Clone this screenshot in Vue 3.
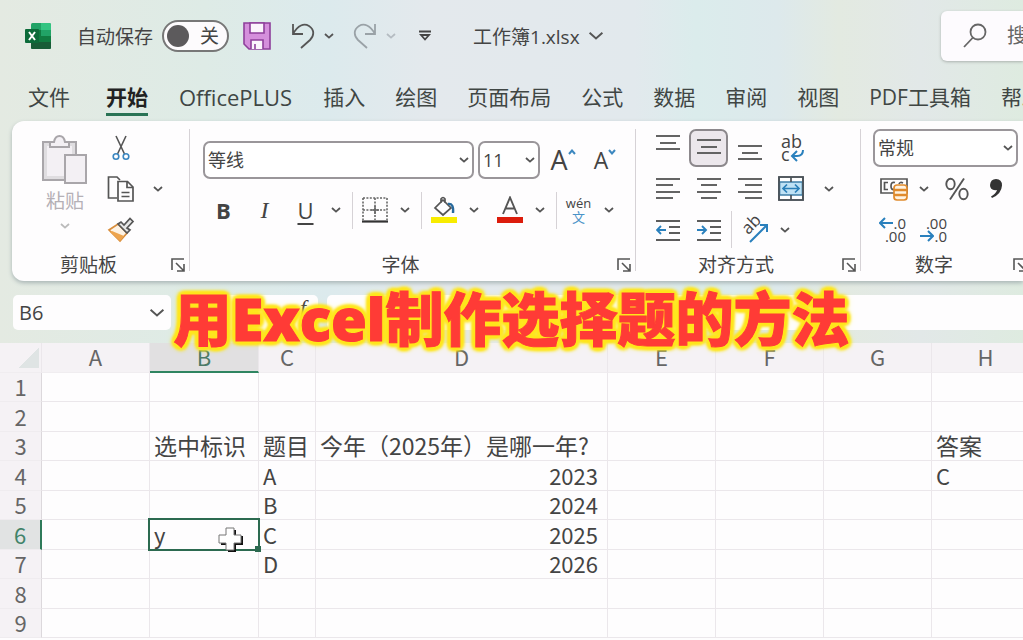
<script setup>
import { h, ref } from 'vue'

const autoSave = ref(false)
const activeTab = ref('开始')
const fontName = ref('等线')
const fontSize = ref('11')
const numberFormat = ref('常规')
const formula = ref('')

const tabs = ['文件', '开始', 'OfficePLUS', '插入', '绘图', '页面布局', '公式', '数据', '审阅', '视图', 'PDF工具箱', '帮助']

// each line is [x1, x2, y]
const verticalAlign = [
  { name: '顶端对齐', lines: [[0, 24, 2], [4, 20, 9], [0, 24, 15]] },
  { name: '垂直居中', active: true, lines: [[0, 24, 6], [4, 20, 13], [0, 24, 19]] },
  { name: '底端对齐', lines: [[0, 24, 12], [4, 20, 19], [0, 24, 25]] },
]
const horizontalAlign = [
  { name: '左对齐', lines: [[0, 24, 4], [0, 17, 10], [0, 24, 17], [0, 17, 23]] },
  { name: '居中', lines: [[0, 24, 4], [4, 20, 10], [0, 24, 17], [4, 20, 23]] },
  { name: '右对齐', lines: [[0, 24, 4], [7, 24, 10], [0, 24, 17], [7, 24, 23]] },
]

const columns = ['A', 'B', 'C', 'D', 'E', 'F', 'G', 'H']
const rows = [1, 2, 3, 4, 5, 6, 7, 8, 9]
const cells = {
  B3: '选中标识',
  C3: '题目',
  D3: '今年（2025年）是哪一年?',
  H3: '答案',
  C4: 'A',
  D4: 2023,
  H4: 'C',
  C5: 'B',
  D5: 2024,
  B6: 'y',
  C6: 'C',
  D6: 2025,
  C7: 'D',
  D7: 2026,
}
const selected = 'B6'

const Chevron = () =>
  h('svg', { class: 'chevron', viewBox: '0 0 10 6' }, [h('path', { d: 'M1 1 L5 4.6 L9 1' })])

const Launcher = () =>
  h('button', { class: 'launcher', 'aria-label': '更多设置' }, [
    h('svg', { width: 15, height: 15, viewBox: '0 0 15 15', fill: 'none', stroke: '#555', 'stroke-width': 1.6 }, [
      h('path', { d: 'M1 12 V1 H13 M5 5 L13 13 M13 6 V13 H6' }),
    ]),
  ])
</script>

<template>
  <div class="excel">
    <header class="titlebar">
      <svg class="logo" width="26" height="26" viewBox="0 0 26 26">
        <rect x="6" y="0" width="20" height="26" rx="1.5" fill="#21a366" />
        <path d="M6 7 H16 V19 H6Z" fill="#107c41" />
        <path d="M16 0 H24.500 Q26 0 26 1.500 V7 H16Z" fill="#33c481" />
        <path d="M6 13 H26 V19 H6Z" fill="#107c41" />
        <path d="M6 19 H26 V24.500 Q26 26 24.500 26 H7.500 Q6 26 6 24.500Z" fill="#185c37" />
        <rect x="0" y="6" width="14" height="14" rx="1" fill="#0c6b3a" />
        <path d="M4 9 L10 17 M10 9 L4 17" stroke="#fff" stroke-width="2" />
      </svg>
      <label class="autosave">
        自动保存
        <span class="switch">
          <input v-model="autoSave" type="checkbox" />
          <span>{{ autoSave ? '开' : '关' }}</span>
        </span>
      </label>
      <button class="save" aria-label="保存">
        <svg width="28" height="28" viewBox="0 0 28 28" fill="#d58fdc" stroke="#8e3f9b" stroke-width="1.600">
          <path d="M1 1 H27 V27 H6 L1 22Z" />
          <path d="M7 1 H21 V11 H7Z" fill="#fbf4fc" />
          <path d="M8 27 V18 H20 V27" fill="#fbf4fc" />
          <path d="M12 27 V22" />
        </svg>
      </button>
      <button class="undo" aria-label="撤消">
        <svg width="24" height="28" viewBox="0 0 24 28" fill="none" stroke="#555" stroke-width="1.800">
          <path d="M2 2 V12 H12 M2 12 C7 3 13 1 18 4 C24 8 23 14 19 18 L10 26" />
        </svg>
      </button>
      <button class="arrow" aria-label="撤消列表"><Chevron /></button>
      <button class="redo" aria-label="恢复">
        <svg width="24" height="28" viewBox="0 0 24 28" fill="none" stroke="#9aa2a7" stroke-width="1.800">
          <path d="M22 2 V12 H12 M22 12 C17 3 11 1 6 4 C0 8 1 14 5 18 L14 26" />
        </svg>
      </button>
      <button class="arrow faded" aria-label="恢复列表"><Chevron /></button>
      <button class="customize" aria-label="自定义快速访问工具栏">
        <svg width="12" height="12" viewBox="0 0 12 12" fill="none" stroke="#444" stroke-width="1.800">
          <path d="M0 1.500 H12 M2 5 H10 L6 9.500Z" />
        </svg>
      </button>
      <button class="filename">
        工作簿1.xlsx
        <Chevron />
      </button>
      <label class="search">
        <svg width="24" height="26" viewBox="0 0 24 26" fill="none" stroke="#666" stroke-width="1.800">
          <circle cx="15" cy="9" r="7.500" />
          <path d="M10 14.500 L1 24" />
        </svg>
        <input type="text" placeholder="搜索" aria-label="搜索" />
      </label>
    </header>

    <nav class="tabs">
      <a
        v-for="tab in tabs"
        :key="tab"
        href="#"
        :class="{ active: tab === activeTab, latin: tab === 'OfficePLUS' }"
        @click.prevent="activeTab = tab"
      >{{ tab }}</a>
    </nav>

    <section class="ribbon">
      <div class="group clipboard">
        <div class="body">
          <button class="paste">
            <svg width="46" height="50" viewBox="0 0 46 50" stroke="#a9a6aa" stroke-width="2">
              <path d="M1 7 H34 V45 H1Z" fill="#dfdde0" />
              <path d="M5 11 H30 V41 H5Z" fill="#f3f0f4" stroke="none" />
              <path d="M8 12 V7 H12 Q13 1 17.500 1 Q22 1 23 7 H27 V12Z" fill="#f3f0f4" />
              <path d="M23 20 H44 V48 H23Z" fill="#f3f0f4" />
            </svg>
            <span>粘贴</span>
            <Chevron />
          </button>
          <div class="rows">
            <div class="row">
              <button class="tool" aria-label="剪切">
                <svg width="18" height="26" viewBox="0 0 18 26" fill="none" stroke="#555" stroke-width="1.600">
                  <path d="M4 1 L12.500 19 M14 1 L5.500 19" />
                  <circle cx="4" cy="21.500" r="2.800" stroke="#3a86c0" />
                  <circle cx="14" cy="21.500" r="2.800" stroke="#3a86c0" />
                </svg>
              </button>
            </div>
            <div class="row">
              <button class="tool" aria-label="复制">
                <svg width="28" height="28" viewBox="0 0 28 28" fill="none" stroke="#555" stroke-width="1.700">
                  <path d="M10 23 H1.500 V2 H10 L13 5" />
                  <path d="M11 6.500 H20.500 L26 12 V26 H11Z M20 6.500 V12.500 H26" />
                  <path d="M14.500 17.500 H22.500 M14.500 21.500 H22.500" />
                </svg>
              </button>
              <button class="arrow" aria-label="复制选项"><Chevron /></button>
            </div>
            <div class="row">
              <button class="tool" aria-label="格式刷">
                <svg width="28" height="26" viewBox="0 0 28 26" stroke-width="1.700">
                  <path d="M11 7 L20 16 L13 24 L2 13Z" fill="#fdf2e4" stroke="#d98e3c" />
                  <path d="M5 14 L17 19 L13 24 L3 15Z" fill="#eda44e" />
                  <path d="M11 7 L14 5 L17 8 L23 1.500 L26 4.500 L20 11 L23 13 L20 16Z" fill="#e6e6e6" stroke="#555" />
                </svg>
              </button>
            </div>
          </div>
        </div>
        <footer><span>剪贴板</span><Launcher /></footer>
      </div>

      <div class="group font">
        <div class="body">
          <div class="row">
            <span class="combo name">
              <select v-model="fontName" aria-label="字体"><option>等线</option></select>
              <Chevron />
            </span>
            <span class="combo size">
              <select v-model="fontSize" aria-label="字号"><option>11</option></select>
              <Chevron />
            </span>
            <button class="grow" aria-label="增大字号">
              A<svg width="8" height="6" viewBox="0 0 8 6"><path d="M1 5 L4 1.500 L7 5" /></svg>
            </button>
            <button class="grow small" aria-label="减小字号">
              A<svg width="8" height="6" viewBox="0 0 8 6"><path d="M1 1 L4 4.500 L7 1" /></svg>
            </button>
          </div>
          <div class="row">
            <button class="tool letter bold">B</button>
            <button class="tool letter italic">I</button>
            <button class="tool letter underline">U</button>
            <button class="arrow" aria-label="下划线选项"><Chevron /></button>
            <i class="split"></i>
            <button class="tool" aria-label="边框">
              <svg width="26" height="26" viewBox="0 0 26 26" fill="none" stroke="#666" stroke-width="1.600">
                <path d="M1 1 H25 M1 1 V23 M25 1 V23 M13 1 V23 M1 13 H25" stroke-dasharray="2 1.400" />
                <path d="M13 9 V17 M9 13 H17" />
                <path d="M0 24.500 H26" stroke="#333" stroke-width="2.200" />
              </svg>
            </button>
            <button class="arrow" aria-label="边框选项"><Chevron /></button>
            <i class="split"></i>
            <button class="tool" aria-label="填充颜色">
              <svg width="26" height="28" viewBox="0 0 26 28" fill="none" stroke="#555" stroke-width="1.700">
                <path d="M12 4 L20 12 L12 19 L4 12Z M10 7 V3 Q12 0 14 3 V7" />
                <path d="M17 8 Q23 7 22 17" stroke="#27699c" stroke-width="2.400" />
                <path d="M0 24 H26" stroke="#f8ec00" stroke-width="6" />
              </svg>
            </button>
            <button class="arrow" aria-label="填充选项"><Chevron /></button>
            <button class="tool text-color" aria-label="字体颜色">
              <svg width="26" height="28" viewBox="0 0 26 28" fill="none" stroke="#555" stroke-width="1.900">
                <path d="M6 18 L13 1.500 L20 18 M8.500 12.500 H17.500" />
                <path d="M0 24 H26" stroke="#dc1c0c" stroke-width="6" />
              </svg>
            </button>
            <button class="arrow" aria-label="颜色选项"><Chevron /></button>
            <i class="split"></i>
            <button class="tool phonetic"><span>wén</span><span>文</span></button>
            <button class="arrow" aria-label="拼音选项"><Chevron /></button>
          </div>
        </div>
        <footer><span>字体</span><Launcher /></footer>
      </div>

      <div class="group align">
        <div class="body rows">
          <div class="row">
            <button v-for="item in verticalAlign" :key="item.name" class="tool" :class="{ pressed: item.active }" :aria-label="item.name">
              <svg class="lines" width="24" height="28" viewBox="0 0 24 28">
                <path v-for="[a, b, y] in item.lines" :key="y" :d="`M${a} ${y} H${b}`" />
              </svg>
            </button>
            <button class="tool wrap" aria-label="自动换行">
              <span>ab</span><span>c</span>
              <svg width="14" height="13" viewBox="0 0 14 13"><path d="M13 1 Q13 7 7 7 H2 M7 2 L2 7 L7 12" /></svg>
            </button>
          </div>
          <div class="row">
            <button v-for="item in horizontalAlign" :key="item.name" class="tool" :aria-label="item.name">
              <svg class="lines" width="24" height="28" viewBox="0 0 24 28">
                <path v-for="[a, b, y] in item.lines" :key="y" :d="`M${a} ${y} H${b}`" />
              </svg>
            </button>
            <button class="tool" aria-label="合并后居中">
              <svg width="26" height="25" viewBox="0 0 26 25" fill="none" stroke="#4b5258" stroke-width="1.700">
                <path d="M1 1 H25 V24 H1Z" fill="#fff" />
                <path d="M1.500 6 H24.500 V19 H1.500Z" fill="#bfe2f5" stroke="#3f7fa8" />
                <path d="M1 1 H25 V24 H1Z M13 1 V6 M13 19 V24" />
                <path d="M5 12.500 H21 M9 8.500 L5 12.500 L9 16.500 M17 8.500 L21 12.500 L17 16.500" stroke="#2a7fb8" />
              </svg>
            </button>
            <button class="arrow spaced" aria-label="合并选项"><Chevron /></button>
          </div>
          <div class="row">
            <button class="tool" aria-label="减少缩进量">
              <svg class="lines" width="24" height="28" viewBox="0 0 24 28">
                <path d="M0 5 H24 M13 11 H24 M13 17 H24 M0 24 H24" />
                <path class="blue" d="M10 14 H1 M5 10 L1 14 L5 18" />
              </svg>
            </button>
            <button class="tool" aria-label="增加缩进量">
              <svg class="lines" width="24" height="28" viewBox="0 0 24 28">
                <path d="M0 5 H24 M13 11 H24 M13 17 H24 M0 24 H24" />
                <path class="blue" d="M0 14 H9 M5 10 L9 14 L5 18" />
              </svg>
            </button>
            <i class="split"></i>
            <button class="tool orient" aria-label="方向">
              <span>ab</span>
              <svg width="20" height="20" viewBox="0 0 20 20"><path d="M1 19 L18 2 M11 2 H18 V9" /></svg>
            </button>
            <button class="arrow" aria-label="方向选项"><Chevron /></button>
          </div>
        </div>
        <footer><span>对齐方式</span><Launcher /></footer>
      </div>

      <div class="group number">
        <div class="body rows">
          <div class="row">
            <span class="combo format">
              <select v-model="numberFormat" aria-label="数字格式"><option>常规</option></select>
              <Chevron />
            </span>
          </div>
          <div class="row">
            <button class="tool" aria-label="会计数字格式">
              <svg width="28" height="24" viewBox="0 0 28 24" fill="none" stroke="#555" stroke-width="1.700">
                <path d="M1 2 H27 V16 H1Z" />
                <path d="M8 5.500 H4.500 V12.500 H8 M15 5.500 Q11 4.500 11 9 Q11 13 14 12.500 M19 7 Q20 4.500 23 6" />
                <rect x="14" y="8" width="13" height="15" rx="3" fill="#fff3e2" stroke="#e08a2c" />
                <path d="M14 13 H27 M14 18 H27" stroke="#e08a2c" stroke-width="2.400" />
              </svg>
            </button>
            <button class="arrow" aria-label="货币选项"><Chevron /></button>
            <button class="tool percent" aria-label="百分比样式">
              <svg width="26" height="24" viewBox="0 0 24 24" fill="none" stroke="#555" stroke-width="1.900">
                <ellipse cx="5.500" cy="7" rx="4.200" ry="5.200" />
                <ellipse cx="18.500" cy="17" rx="4.200" ry="5.200" />
                <path d="M19 1.500 L5 22.500" />
              </svg>
            </button>
            <button class="tool" aria-label="千位分隔样式">
              <svg width="14" height="20" viewBox="0 0 14 20" fill="#333">
                <path d="M7 0 Q13 0 13 6.500 Q12.500 15 3 19 L2 17.500 Q7 14.500 8 11 Q1 12 1 6 Q1.500 0 7 0Z" />
              </svg>
            </button>
          </div>
          <div class="row">
            <button class="tool decimal">
              <span><svg width="14" height="12" viewBox="0 0 14 12"><path d="M14 6 H1 M6 1 L1 6 L6 11" /></svg>.0</span>
              <span>.00</span>
            </button>
            <button class="tool decimal">
              <span>.00</span>
              <span><svg width="14" height="12" viewBox="0 0 14 12"><path d="M0 6 H13 M8 1 L13 6 L8 11" /></svg>.0</span>
            </button>
          </div>
        </div>
        <footer><span>数字</span><Launcher /></footer>
      </div>
    </section>

    <div class="formula-bar">
      <label class="name-box">
        <input type="text" :value="selected" aria-label="名称框" />
        <Chevron />
      </label>
      <button class="fx">f</button>
      <input v-model="formula" class="formula" type="text" aria-label="编辑栏" />
    </div>

    <main class="sheet">
      <table>
        <colgroup>
          <col class="col-head" />
          <col v-for="c in columns" :key="c" :class="'col-' + c.toLowerCase()" />
        </colgroup>
        <thead>
          <tr>
            <th class="corner"></th>
            <th v-for="c in columns" :key="c" :class="{ current: selected[0] === c }">{{ c }}</th>
          </tr>
        </thead>
        <tbody>
          <tr v-for="r in rows" :key="r">
            <th :class="{ current: selected === 'B' + r }">{{ r }}</th>
            <td
              v-for="c in columns"
              :key="c"
              :class="{ selected: selected === c + r, numeric: typeof cells[c + r] === 'number', title: r === 3 }"
            >
              {{ cells[c + r] }}
              <svg v-if="selected === c + r" class="cursor" width="26" height="26" viewBox="0 0 26 26">
                <path d="M10 3 H18 V9 H25 V18 H18 V25 H10 V18 H3 V9 H10Z" fill="#111" />
                <path d="M8 1 H16 V8 H23 V16 H16 V23 H8 V16 H1 V8 H8Z" fill="#fff" stroke="#777" stroke-width="1" />
              </svg>
            </td>
          </tr>
        </tbody>
      </table>
    </main>

    <h1 class="banner">用Excel制作选择题的方法</h1>
  </div>
</template>

<style>
body {
  margin: 0;
  overflow: hidden;
}
</style>

<style scoped>
.excel {
  position: relative;
  display: flex;
  flex-direction: column;
  height: 100vh;
  overflow: hidden;
  color: #444;
  font-family: "Open Sans", "Noto Sans CJK SC", sans-serif;
  background: linear-gradient(90deg, #e4eae2 0%, #deebe6 20%, #dceaed 32%, #e4e9ed 42%, #e2e9ed 62%, #dbecec 68%, #dde9ec 76%, #e3eae1 82%, #e2e8e8 90%, #deebe0 100%);
}

button {
  display: flex;
  align-items: center;
  justify-content: center;
  flex: none;
  margin: 0;
  padding: 0;
  border: none;
  background: none;
  color: inherit;
  font-family: inherit;
  cursor: pointer;
}

input,
select {
  color: inherit;
  font-family: inherit;
}

.excel :deep(.chevron) {
  flex: none;
  width: 10px;
  height: 6px;
  fill: none;
  stroke: #555;
  stroke-width: 1.8;
}

/* title bar */
.titlebar {
  display: flex;
  align-items: center;
  height: 71px;
  flex: none;
  padding-left: 25px;
  font-size: 19px;
  white-space: nowrap;
}

.logo {
  flex: none;
}

.autosave {
  display: flex;
  align-items: center;
  gap: 9px;
  margin-left: 26px;
}

.switch {
  position: relative;
  display: flex;
}

.switch input {
  appearance: none;
  width: 67px;
  height: 32px;
  margin: 0;
  border: 2px solid #777;
  border-radius: 16px;
  background: #fdfbfd;
}

.switch input::before {
  content: "";
  display: block;
  width: 22px;
  height: 22px;
  margin: 3px;
  border-radius: 50%;
  background: #5c5a5c;
}

.switch input:checked::before {
  margin-left: 38px;
}

.switch span {
  position: absolute;
  right: 10px;
  top: 2px;
  line-height: 28px;
}

.save {
  margin-left: 14px;
}

.undo {
  margin-left: 20px;
}

.redo {
  margin-left: 14px;
}

.arrow {
  width: 20px;
  height: 36px;
}

.titlebar .arrow {
  margin-left: 4px;
}

.excel .faded :deep(.chevron) {
  stroke: #b5bcc2;
}

.customize {
  width: 24px;
  height: 24px;
  margin-left: 12px;
}

.filename {
  gap: 8px;
  margin-left: 36px;
  font-size: 19px;
}

.filename :deep(.chevron),
.name-box :deep(.chevron) {
  width: 16px;
  height: 10px;
  stroke-width: 1.2;
}

.search {
  display: flex;
  align-items: center;
  gap: 20px;
  width: 60px;
  height: 50px;
  margin-left: auto;
  padding-left: 22px;
  border-radius: 6px 0 0 6px;
  background: #fdfbfe;
  box-shadow: 0 1px 3px #aab0ad;
}

.search svg {
  flex: none;
}

.search input {
  width: 60px;
  padding: 0;
  border: none;
  background: none;
  font-size: 20px;
}

.search input::placeholder {
  color: #666;
}

/* tabs */
.tabs {
  display: flex;
  gap: 30px;
  flex: none;
  height: 50px;
  padding-left: 28px;
}

.tabs a {
  flex: none;
  height: 42px;
  border-bottom: 3px solid transparent;
  color: #404644;
  font-size: 21px;
  line-height: 52px;
  text-decoration: none;
  white-space: nowrap;
}

.tabs a:first-child {
  margin-right: 6px;
}

.tabs .active {
  border-color: #2a7355;
  color: #222;
  font-weight: bold;
}

.tabs .latin {
  padding: 0 1px;
  font-size: 22px;
}

/* ribbon */
.ribbon {
  display: flex;
  flex: none;
  margin-left: 12px;
  padding: 6px 0 0;
  border-radius: 12px 0 0 12px;
  background: #fefdfe;
  box-shadow: 0 2px 4px #a9b5b5;
}

.group {
  position: relative;
  display: flex;
  flex-direction: column;
  flex: none;
  width: 225px;
}

.group::after {
  content: "";
  position: absolute;
  top: 2px;
  right: 0;
  bottom: 10px;
  width: 1px;
  background: #d6d2d6;
}

.clipboard {
  width: 178px;
}

.font {
  width: 446px;
}

.number {
  width: 171px;
}

.body {
  display: flex;
  height: 123px;
}

.rows,
.font .body {
  display: flex;
  flex-direction: column;
}

.row {
  display: flex;
  align-items: center;
  height: 41px;
}

.group footer {
  display: flex;
  align-items: center;
  height: 31px;
  padding-right: 4px;
  font-size: 19px;
  line-height: 28px;
}

.group footer span {
  flex: 1;
  padding-right: 5px;
  margin-bottom: 2px;
  text-align: center;
}

.group footer :deep(.launcher) {
  width: 16px;
  padding: 0;
  border: none;
  background: none;
}

.tool {
  position: relative;
  width: 41px;
  height: 38px;
}

.paste {
  flex-direction: column;
  justify-content: flex-start;
  width: 66px;
  margin: 0 2px 0 20px;
  padding-top: 8px;
  color: #b5b0b6;
  font-size: 19px;
  line-height: 32px;
}

.paste :deep(.chevron) {
  margin-top: 6px;
  stroke: #bbb;
}

.clipboard .arrow {
  margin-left: 7px;
}

.font .body {
  gap: 12px;
  padding: 14px 0 0 13px;
  box-sizing: border-box;
}

.font .row {
  height: 38px;
}

.combo {
  position: relative;
  display: flex;
  align-items: center;
}

.combo select {
  appearance: none;
  box-sizing: border-box;
  width: 100%;
  height: 38px;
  padding: 0 3px;
  border: 2px solid #9a969a;
  border-radius: 7px;
  background: #fff;
  font-size: 18px;
}

.combo :deep(.chevron) {
  position: absolute;
  right: 5px;
  pointer-events: none;
}

.combo.name {
  width: 271px;
}

.combo.size {
  width: 62px;
  margin-left: 4px;
}

.combo.format {
  width: 145px;
}

.grow {
  align-items: flex-start;
  width: 46px;
  font-size: 27px;
  line-height: 32px;
}

.grow.small {
  width: 38px;
  font-size: 23px;
}

.grow svg {
  margin-top: 5px;
  fill: none;
  stroke: #3d88c0;
  stroke-width: 2;
}

.letter {
  font-size: 22px;
}

.bold {
  font-weight: bold;
}

.italic {
  font-family: "Liberation Serif", serif;
  font-size: 24px;
  font-style: italic;
}

.underline {
  text-decoration: underline;
  text-decoration-thickness: 2px;
  text-underline-offset: 4px;
}

.split {
  width: 1px;
  height: 37px;
  margin: 0 2px;
  background: #d6d2d6;
}

.font .split {
  margin: 0 1px 0 6px;
}

.text-color {
  margin-left: 5px;
}

.phonetic {
  flex-direction: column;
  font-size: 13px;
  line-height: 14px;
}

.phonetic span:last-child {
  color: #4a93c8;
}

.align .body {
  padding-left: 11px;
}

.lines {
  fill: none;
  stroke: #5c5c5c;
  stroke-width: 1.9;
}

.lines .blue {
  stroke: #2a80bd;
}

.pressed {
  box-sizing: border-box;
  border: 2px solid #8c888c;
  border-radius: 7px;
  background: #ece7ec;
  width: 39px;
  margin: 0 1px;
}

.wrap {
  flex-direction: column;
  align-items: flex-start;
  padding-left: 11px;
  font-size: 18px;
  line-height: 13px;
}

.wrap svg {
  position: absolute;
  right: 7px;
  bottom: 5px;
  fill: none;
  stroke: #2a80bd;
  stroke-width: 2;
}

.spaced {
  margin-left: 8px;
}

.orient span {
  position: absolute;
  top: 3px;
  left: 7px;
  font-size: 17px;
  line-height: 20px;
  transform: rotate(-45deg);
}

.orient svg {
  position: absolute;
  right: 6px;
  bottom: 6px;
  fill: none;
  stroke: #2a80bd;
  stroke-width: 2;
}

.number .body {
  padding-left: 12px;
}

.percent {
  padding-left: 4px;
}

.decimal {
  flex-direction: column;
  align-items: flex-end;
  padding-right: 8px;
  font-size: 15px;
  line-height: 13px;
}

.decimal span {
  display: flex;
  align-items: center;
}

.decimal svg {
  fill: none;
  stroke: #2a80bd;
  stroke-width: 2;
}

/* formula bar */
.formula-bar {
  display: flex;
  flex: none;
  gap: 9px;
  padding: 14px 0 13px 13px;
  font-size: 20px;
}

.name-box {
  display: flex;
  align-items: center;
  width: 158px;
  height: 35px;
  border-radius: 5px;
  background: #fefdfe;
}

.name-box input {
  flex: 1;
  min-width: 0;
  padding: 0 6px;
  border: none;
  background: none;
  font-size: 20px;
}

.name-box :deep(.chevron) {
  margin-right: 6px;
}

.fx {
  align-items: flex-start;
  width: 138px;
  height: 35px;
  padding-left: 108px;
  border-radius: 5px;
  background: #fefdfe;
  font-family: "Liberation Serif", serif;
  font-size: 22px;
  font-style: italic;
}

.formula {
  flex: 1;
  min-width: 0;
  padding: 0 6px;
  border: none;
  border-radius: 5px 0 0 5px;
  background: #fefdfe;
  font-size: 20px;
}

/* sheet */
.sheet {
  flex: 1;
  overflow: hidden;
  background: #fefdfe;
}

table {
  width: 1040px;
  border-spacing: 0;
  table-layout: fixed;
  font-family: "Noto Sans CJK SC", sans-serif;
  font-size: 22px;
  line-height: 26px;
}

.col-head {
  width: 42px;
}

.col-b {
  width: 109px;
}

.col-c {
  width: 57px;
}

.col-d {
  width: 292px;
}

tr {
  height: 30px;
}

tbody tr:nth-child(odd) {
  height: 29px;
}

th,
td {
  box-sizing: border-box;
  padding: 0 0 2px;
  border-right: 1px solid #ebe7eb;
  border-bottom: 1px solid #ebe7eb;
  white-space: nowrap;
}

th {
  background: #f5f2f5;
  color: #666;
  font-weight: normal;
}

thead th {
  padding-bottom: 3px;
  border-bottom-color: #f0edf0;
}

tbody th {
  border-bottom-color: #efecef;
  border-right-color: #dcd8dc;
}

.corner {
  background: linear-gradient(135deg, transparent 50%, #dfe4e4 50%) no-repeat 19px 4px / 20px 21px #f5f2f5;
}

thead .current {
  padding-bottom: 2px;
  border-bottom: 2px solid #2f8561;
  background: #e1e0e1;
  color: #4c7a67;
}

tbody .current {
  border-right: 2px solid #2f7a5a;
  background: #e1e3e3;
  color: #41836a;
}

td {
  padding-left: 4px;
  text-align: left;
}

.title {
  font-size: 23px;
}

.numeric {
  padding-right: 9px;
  text-align: right;
}

.selected {
  position: relative;
}

/* selection frame and its fill handle */
.selected::before {
  content: "";
  position: absolute;
  inset: -2px;
  border: 2px solid #2c6a50;
}

.selected::after {
  content: "";
  position: absolute;
  right: -3px;
  bottom: -3px;
  width: 6px;
  height: 6px;
  background: #2c6a50;
}

.cursor {
  position: absolute;
  right: 14px;
  bottom: -4px;
}

.banner {
  position: absolute;
  top: 284px;
  left: 0;
  right: 0;
  margin: 0;
  color: #ff3b36;
  font-size: 58px;
  font-weight: 900;
  line-height: 70px;
  text-align: center;
  white-space: nowrap;
  pointer-events: none;
  -webkit-text-stroke: 1px #ff3b36;
  text-shadow:
    4px 0 3px #ffe61c,
    -4px 0 3px #ffe61c,
    0 4px 3px #ffe61c,
    0 -4px 3px #ffe61c,
    3px 3px 3px #ffe61c,
    -3px 3px 3px #ffe61c,
    3px -3px 3px #ffe61c,
    -3px -3px 3px #ffe61c,
    0 0 8px #ffe61c;
}
</style>
